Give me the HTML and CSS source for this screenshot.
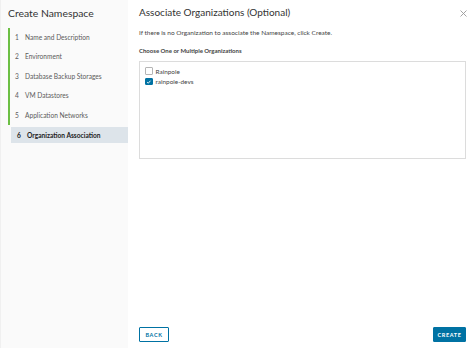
FILE: index.html
```html
<!DOCTYPE html>
<html lang="en">
<head>
    <meta charset="UTF-8">
    <meta name="viewport" content="width=device-width, initial-scale=1.0">
    <title>Create Namespace</title>
    <link rel="stylesheet" href="styles.css">
</head>
<body>

    <div class="wizard">
        <div class="sidebar">
            <h1>Create Namespace</h1>
            <ul class="steps">
                <li class="done"><span class="num">1</span>Name and Description</li>
                <li class="done"><span class="num">2</span>Environment</li>
                <li class="done"><span class="num">3</span>Database Backup Storages</li>
                <li class="done"><span class="num">4</span>VM Datastores</li>
                <li class="done"><span class="num">5</span>Application Networks</li>
                <li class="active"><span class="num">6</span>Organization Association</li>
            </ul>
        </div>

        <div class="content">
            <div class="header">
                <h2>Associate Organizations (Optional)</h2>
                <button class="close-btn" aria-label="Close">
                    <svg width="7" height="7" viewBox="0 0 7 7"><path d="M0.5 0.5L6.5 6.5M6.5 0.5L0.5 6.5" stroke="#9a9a9a" stroke-width="0.9"/></svg>
                </button>
            </div>
            <p class="hint">If there is no Organization to associate the Namespace, click Create.</p>
            <div class="field-label">Choose One or Multiple Organizations</div>
            <div class="org-box">
                <label class="org"><span class="box"></span>Rainpole</label>
                <label class="org checked"><span class="box">
                    <svg width="6" height="6" viewBox="0 0 6 6"><path d="M1.2 3.1L2.5 4.3L4.9 1.6" stroke="#fff" stroke-width="1" fill="none"/></svg>
                </span>rainpole-devs</label>
            </div>
            <div class="footer">
                <button class="btn btn-outline">BACK</button>
                <button class="btn btn-primary">CREATE</button>
            </div>
        </div>
    </div>

</body>
</html>
```

FILE: styles.css
```css
body {
    font-family: Lato, "Open Sans", Arial, sans-serif;
    margin: 0;
    background-color: #fff;
    color: #333;
}
.wizard {
    display: flex;
    height: 348px;
}
.sidebar {
    width: 128px;
    background-color: #fafafa;
    border-left: 1px solid #f0f0f0;
    box-sizing: border-box;
}
.sidebar h1 {
    font-size: 10.4px;
    font-weight: 400;
    color: #333;
    margin: 6px 0 0 7px;
    line-height: 14px;
}
.steps {
    list-style-type: none;
    padding: 0;
    margin: 8px 0 0 7px;
}
.steps li {
    height: 19.4px;
    line-height: 19.4px;
    font-size: 6.6px;
    color: #5a5a5a;
    padding-left: 5px;
    border-left: 2px solid transparent;
}
.steps li.done {
    border-left-color: #6cbf44;
}
.steps li.active {
    background-color: #dde4ea;
    color: #222;
    font-weight: 700;
    margin-left: 3px;
    padding-left: 4px;
    height: 16px;
    line-height: 16px;
    margin-top: 2px;
}
.num {
    display: inline-block;
    width: 7px;
    margin-right: 3px;
}
.content {
    flex: 1;
    padding: 0 8px 0 11px;
    display: flex;
    flex-direction: column;
}
.header {
    display: flex;
    justify-content: space-between;
    align-items: center;
    height: 24px;
}
.header h2 {
    font-size: 10px;
    font-weight: 400;
    color: #333;
    margin: 0;
}
.close-btn {
    background: none;
    border: none;
    padding: 0;
    margin-right: -1px;
    margin-top: 2px;
    display: flex;
}
.hint {
    font-size: 6.5px;
    color: #444;
    margin: 5px 0 0 0;
    line-height: 8px;
}
.field-label {
    font-size: 6px;
    font-weight: 700;
    color: #444;
    margin-top: 10px;
    line-height: 8px;
}
.org-box {
    border: 1px solid #dcdcdc;
    height: 86px;
    margin-top: 6px;
    padding: 5px 5px;
    display: flex;
    flex-direction: column;
    gap: 2.5px;
}
.org {
    display: flex;
    align-items: center;
    font-size: 6.4px;
    color: #444;
    height: 8px;
}
.box {
    width: 5.5px;
    height: 5.5px;
    border: 1px solid #b5b5b5;
    border-radius: 1px;
    margin-right: 3px;
    display: flex;
    align-items: center;
    justify-content: center;
    box-sizing: content-box;
    background: #fff;
}
.org.checked .box {
    background: #0072a3;
    border-color: #0072a3;
}
.footer {
    margin-top: auto;
    margin-bottom: 6px;
    display: flex;
    justify-content: space-between;
}
.btn {
    height: 15px;
    font-family: Lato, Arial, sans-serif;
    font-size: 5.5px;
    font-weight: 700;
    letter-spacing: 0.6px;
    border-radius: 1px;
    padding: 0;
    cursor: pointer;
}
.btn-outline {
    background: #fff;
    color: #0072a3;
    border: 1px solid #0072a3;
    width: 30px;
}
.btn-primary {
    background: #0072a3;
    color: #fff;
    border: 1px solid #0072a3;
    width: 33px;
}
```
